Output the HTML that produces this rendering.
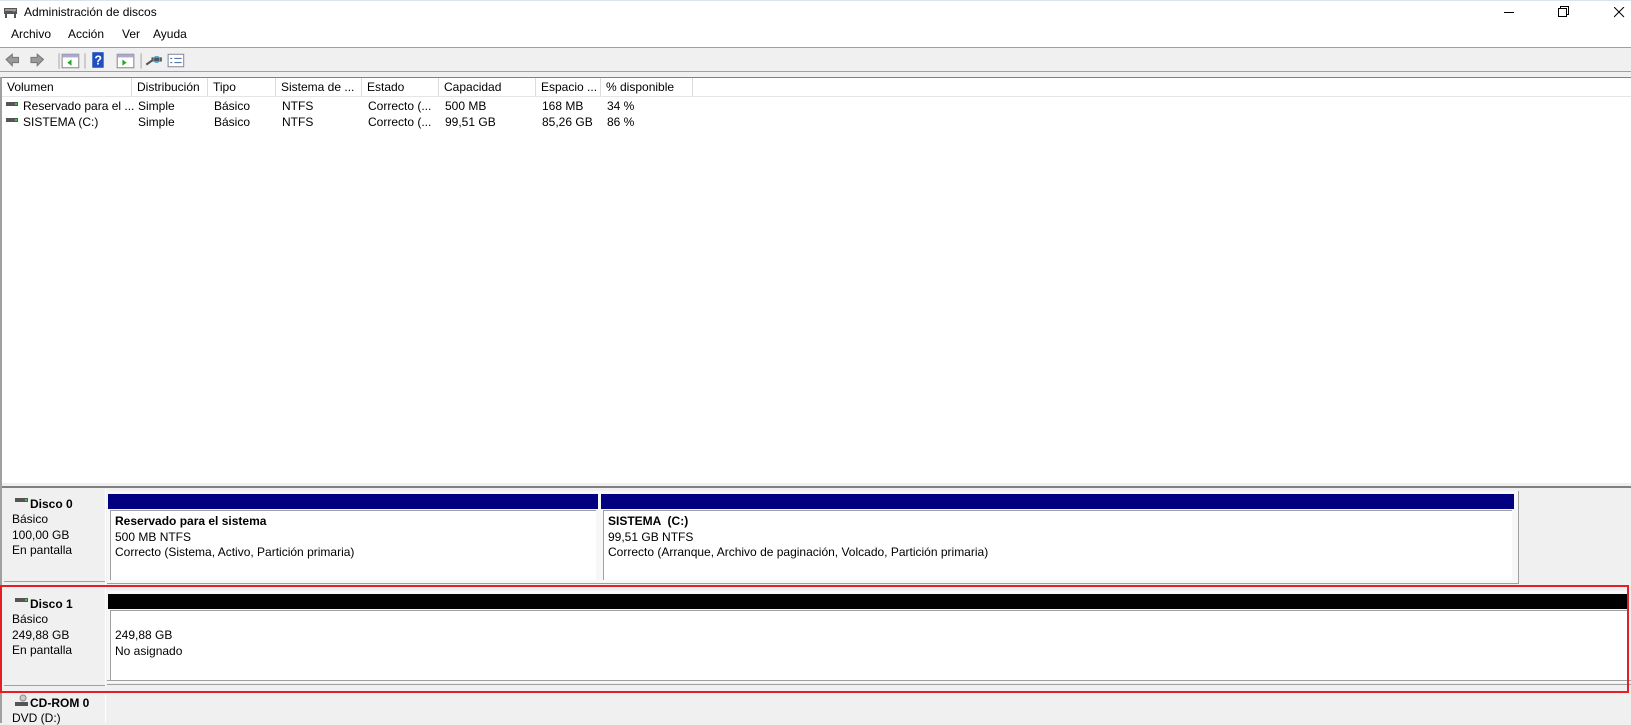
<!DOCTYPE html><html><head><meta charset="utf-8"><style>
body{margin:0;width:1631px;height:723px;position:relative;overflow:hidden;background:#f0f0f0;font-family:"Liberation Sans",sans-serif;font-size:12px;color:#000}
.a{position:absolute;white-space:nowrap}
.hdr span{position:absolute;top:0;height:18px;line-height:18px;border-right:1px solid #dcdcdc;padding-left:5px;box-sizing:border-box}
</style></head><body>
<div class="a" style="left:0;top:0;width:1631px;height:48px;background:#fff"></div>
<div class="a" style="left:0;top:0;width:1631px;height:1px;background:#dde3ee"></div>
<svg class="a" style="left:4px;top:6px" width="14" height="12"><rect x="0" y="2" width="13" height="6" fill="#555"/><rect x="1" y="3" width="11" height="2" fill="#999"/><rect x="9" y="5" width="2" height="1" fill="#2c2"/><rect x="1" y="8" width="2" height="4" fill="#555"/><rect x="10" y="8" width="2" height="4" fill="#555"/></svg>
<div class="a" style="left:24px;top:5px">Administración de discos</div>
<div class="a" style="left:1504px;top:12px;width:10px;height:1px;background:#000"></div>
<div class="a" style="left:1558px;top:8px;width:7px;height:7px;border:1px solid #000;background:#fff;box-shadow:2px -2px 0 -1px #fff,2px -2px 0 0 #000"></div>
<svg class="a" style="left:1614px;top:7px" width="11" height="11"><path d="M0 0L10 10M10 0L0 10" stroke="#000"/></svg>
<div class="a" style="left:11px;top:27px">Archivo</div>
<div class="a" style="left:68px;top:27px">Acción</div>
<div class="a" style="left:122px;top:27px">Ver</div>
<div class="a" style="left:153px;top:27px">Ayuda</div>
<div class="a" style="left:0;top:47px;width:1631px;height:1px;background:#a0a0a0"></div>
<svg class="a" style="left:5px;top:51px" width="187" height="19" viewBox="0 0 180 18">
<path d="M1 8L7 3V6H13V11H7V14Z" fill="#999" stroke="#777"/><path d="M37 8L31 3V6H25V11H31V14Z" fill="#999" stroke="#777"/>
<line x1="52" y1="2" x2="52" y2="17" stroke="#aaa"/>
<rect x="55" y="3" width="16" height="13" fill="#fff" stroke="#888"/><rect x="55" y="3" width="16" height="3" fill="#aac"/><path d="M64 8L60 11L64 14Z" fill="#2a2"/>
<line x1="77" y1="2" x2="77" y2="17" stroke="#aaa"/>
<rect x="84" y="1" width="11" height="15" fill="#1f4fbf"/><text x="86" y="13" fill="#fff" font-size="12" font-weight="bold" font-family="Liberation Sans">?</text>
<rect x="108" y="3" width="16" height="13" fill="#fff" stroke="#888"/><rect x="108" y="3" width="16" height="3" fill="#aac"/><path d="M113 8L117 11L113 14Z" fill="#2a2"/>
<line x1="131" y1="2" x2="131" y2="17" stroke="#aaa"/>
<path d="M136 13L143 8" stroke="#555" stroke-width="2"/><rect x="141" y="6" width="10" height="4" fill="#555"/><circle cx="146" cy="8" r="3" fill="none" stroke="#4ad"/>
<rect x="157" y="3" width="15" height="12" fill="#fff" stroke="#889"/><path d="M159 7H161M163 7H170M159 11H161M163 11H170" stroke="#57a"/>
</svg>
<div class="a" style="left:0;top:71px;width:1631px;height:1px;background:#a0a0a0"></div>
<div class="a" style="left:0;top:77px;width:1631px;height:404px;background:#fff;border-top:1px solid #828282"></div>
<div class="a" style="left:0;top:77px;width:2px;height:646px;background:#a0a0a0"></div>
<div class="a hdr" style="left:2px;top:78px;width:1629px;height:18px;border-bottom:1px solid #e5e5e5">
<span style="left:0;width:130px">Volumen</span><span style="left:130px;width:76px">Distribución</span><span style="left:206px;width:68px">Tipo</span><span style="left:274px;width:86px">Sistema de ...</span><span style="left:360px;width:77px">Estado</span><span style="left:437px;width:97px">Capacidad</span><span style="left:534px;width:65px">Espacio ...</span><span style="left:599px;width:92px">% disponible</span></div>
<svg class="a" style="left:6px;top:102px" width="13" height="24"><rect y="0" width="12" height="4" fill="#555"/><rect x="9" y="1" width="2" height="2" fill="#3c3"/><rect y="16" width="12" height="4" fill="#555"/><rect x="9" y="17" width="2" height="2" fill="#3c3"/></svg>
<div class="a" style="left:23px;top:99px">Reservado para el ...</div><div class="a" style="left:138px;top:99px">Simple</div><div class="a" style="left:214px;top:99px">Básico</div><div class="a" style="left:282px;top:99px">NTFS</div><div class="a" style="left:368px;top:99px">Correcto (...</div><div class="a" style="left:445px;top:99px">500 MB</div><div class="a" style="left:542px;top:99px">168 MB</div><div class="a" style="left:607px;top:99px">34 %</div>
<div class="a" style="left:23px;top:115px">SISTEMA (C:)</div><div class="a" style="left:138px;top:115px">Simple</div><div class="a" style="left:214px;top:115px">Básico</div><div class="a" style="left:282px;top:115px">NTFS</div><div class="a" style="left:368px;top:115px">Correcto (...</div><div class="a" style="left:445px;top:115px">99,51 GB</div><div class="a" style="left:542px;top:115px">85,26 GB</div><div class="a" style="left:607px;top:115px">86 %</div>
<div class="a" style="left:2px;top:483px;width:1629px;height:3px;background:#f0f0f0"></div>
<div class="a" style="left:2px;top:481px;width:1629px;height:2px;background:#fff"></div>
<div class="a" style="left:2px;top:486px;width:1629px;height:2px;background:#808080"></div>
<!-- disk 0 -->
<div class="a" style="left:105px;top:489px;width:1px;height:98px;background:#fff"></div>
<div class="a" style="left:4px;top:581px;width:101px;height:1px;background:#a0a0a0"></div>
<div class="a" style="left:107px;top:491px;width:1411px;height:92px;background:#f7f7f7;border-right:1px solid #a0a0a0;border-bottom:1px solid #a0a0a0"></div>
<div class="a" style="left:108px;top:494px;width:490px;height:15px;background:#000080"></div>
<div class="a" style="left:601px;top:494px;width:913px;height:15px;background:#000080"></div>
<div class="a" style="left:110px;top:510px;width:485px;height:69px;background:#fff;border-top:1px solid #a0a0a0;border-left:1px solid #a0a0a0"></div>
<div class="a" style="left:603px;top:510px;width:908px;height:69px;background:#fff;border-top:1px solid #a0a0a0;border-left:1px solid #a0a0a0"></div>
<svg class="a" style="left:15px;top:498px" width="14" height="6"><rect width="13" height="4" fill="#555"/><rect x="10" y="1" width="2" height="2" fill="#3c3"/></svg>
<div class="a" style="left:30px;top:497px;font-weight:bold">Disco 0</div>
<div class="a" style="left:12px;top:512px;line-height:15.6px">Básico<br>100,00 GB<br>En pantalla</div>
<div class="a" style="left:115px;top:514px;line-height:15.6px"><b>Reservado para el sistema</b><br>500 MB NTFS<br>Correcto (Sistema, Activo, Partición primaria)</div>
<div class="a" style="left:608px;top:514px;line-height:15.6px"><b>SISTEMA &nbsp;(C:)</b><br>99,51 GB NTFS<br>Correcto (Arranque, Archivo de paginación, Volcado, Partición primaria)</div>
<!-- disk 1 -->
<div class="a" style="left:105px;top:589px;width:1px;height:98px;background:#fff"></div>
<div class="a" style="left:4px;top:685px;width:101px;height:1px;background:#a0a0a0"></div>
<div class="a" style="left:107px;top:591px;width:1524px;height:92px;background:#f7f7f7"></div>
<div class="a" style="left:108px;top:594px;width:1520px;height:15px;background:#000"></div>
<div class="a" style="left:110px;top:610px;width:1516px;height:69px;background:#fff;border-top:1px solid #a0a0a0;border-left:1px solid #a0a0a0"></div>
<div class="a" style="left:107px;top:680px;width:1524px;height:1px;background:#a0a0a0"></div>
<div class="a" style="left:107px;top:684px;width:1524px;height:1px;background:#a0a0a0"></div>
<svg class="a" style="left:15px;top:598px" width="14" height="6"><rect width="13" height="4" fill="#555"/><rect x="10" y="1" width="2" height="2" fill="#3c3"/></svg>
<div class="a" style="left:30px;top:597px;font-weight:bold">Disco 1</div>
<div class="a" style="left:12px;top:612px;line-height:15.6px">Básico<br>249,88 GB<br>En pantalla</div>
<div class="a" style="left:115px;top:628px;line-height:15.6px">249,88 GB<br>No asignado</div>
<div class="a" style="left:0;top:585px;width:1625px;height:104px;border:2px solid #e81c23"></div>
<div class="a" style="left:105px;top:694px;width:1px;height:29px;background:#fff"></div>
<svg class="a" style="left:15px;top:694px" width="14" height="13"><circle cx="8" cy="4" r="3" fill="#ccc" stroke="#888"/><rect y="8" width="13" height="4" fill="#555"/></svg>
<div class="a" style="left:30px;top:696px;font-weight:bold">CD-ROM 0</div>
<div class="a" style="left:12px;top:711px">DVD (D:)</div>
</body></html>
